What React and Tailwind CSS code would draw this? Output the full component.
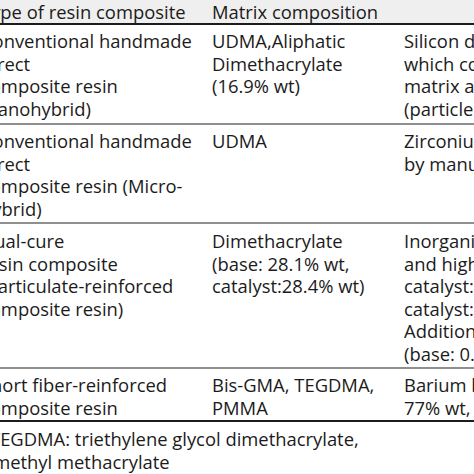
const ROWS = [
  {
    pt: "pt-[5px] pb-[3px] border-[#8f8f8f]",
    a: ["Conventional handmade", "direct", "composite resin", "(nanohybrid)"],
    b: ["UDMA,Aliphatic", "Dimethacrylate", "(16.9% wt)"],
    c: ["Silicon dioxide nanoparticles", "which constitute the filler", "matrix and the resin", "(particle size: 20 nm)"],
  },
  {
    pt: "pt-[5px] pb-[2px] border-[#8f8f8f]",
    a: ["Conventional handmade", "direct", "composite resin (Micro-", "hybrid)"],
    b: ["UDMA"],
    c: ["Zirconium silicate (not disclosed", "by manufacturer)"],
  },
  {
    pt: "pt-[6px] pb-[2px] border-[#8f8f8f]",
    a: ["Dual-cure", "resin composite", "(particulate-reinforced", "composite resin)"],
    b: ["Dimethacrylate", "(base: 28.1% wt,", "catalyst:28.4% wt)"],
    c: ["Inorganic filler: Glass", "and highly dispersed silica", "catalyst: 71.9% wt,", "catalyst: 71.6% wt)", "Additional: Initiators", "(base: 0.1% wt)"],
  },
  {
    pt: "pt-[5px] pb-[1px] border-[#1c1c1c]",
    a: ["Short fiber-reinforced", "composite resin"],
    b: ["Bis-GMA, TEGDMA,", "PMMA"],
    c: ["Barium borosilicate glass", "77% wt, E-glass fibers"],
  },
];

function Cell({ lines, className }) {
  return (
    <div className={className}>
      {lines.map((l, i) => (
        <div key={i} className="whitespace-nowrap">{l}</div>
      ))}
    </div>
  );
}

export default function App() {
  return (
    <div
      className="w-[474px] h-[474px] overflow-hidden bg-white text-[#1b1b1b] text-[18.4px] leading-[22.5px]"
      style={{ fontFamily: '"Open Sans", "Noto Sans", sans-serif' }}
    >
      <div className="ml-[-19px] w-[760px]">
        <div className="flex h-[25px] pt-[1px] bg-[#efefef] border-b-2 border-[#1c1c1c]">
          <div className="w-[231px] shrink-0 whitespace-nowrap">Type of resin composite</div>
          <div className="w-[192px] shrink-0 whitespace-nowrap">Matrix composition</div>
          <div className="flex-1" />
        </div>
        {ROWS.map((r, i) => (
          <div key={i} className={`flex border-b-2 ${r.pt}`}>
            <Cell lines={r.a} className="w-[231px] shrink-0" />
            <Cell lines={r.b} className="w-[192px] shrink-0" />
            <Cell lines={r.c} className="flex-1" />
          </div>
        ))}
        <div className="pt-[6px] pl-[9px]">
          <div className="whitespace-nowrap">TEGDMA: triethylene glycol dimethacrylate,</div>
          <div className="whitespace-nowrap ml-[-33px]">polymethyl methacrylate</div>
        </div>
      </div>
    </div>
  );
}
